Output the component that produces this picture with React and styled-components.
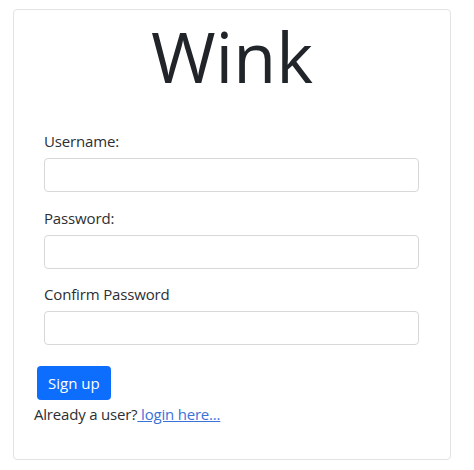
import React from 'react'
import styled, { createGlobalStyle } from 'styled-components'

const GlobalStyle = createGlobalStyle`
  body {
    margin: 0;
    background: #fff;
    font-family: "Open Sans", "Liberation Sans", sans-serif;
    color: #212529;
  }
`

const Card = styled.div`
  box-sizing: border-box;
  width: 438px;
  height: 451px;
  margin: 9px 0 0 13px;
  border: 1px solid #e3e3e3;
  border-radius: 4px;
  display: flex;
  flex-direction: column;
`

const Title = styled.h1`
  margin: 4px 0 0;
  font-size: 70px;
  font-weight: 400;
  line-height: 84px;
  text-align: center;
  color: #212529;
`

const Form = styled.form`
  display: flex;
  flex-direction: column;
  margin-top: 32px;
`

const Field = styled.div`
  display: flex;
  flex-direction: column;
  padding: 0 31px 0 30px;
  margin-bottom: 14.5px;
`

const Label = styled.label`
  font-size: 15px;
  line-height: 22px;
  letter-spacing: -0.15px;
  margin-bottom: 6px;
  color: #2b2f33;
`

const Input = styled.input`
  box-sizing: border-box;
  height: 34px;
  width: 100%;
  border: 1px solid #d6d8da;
  border-radius: 4px;
  padding: 4px 10px;
  font-size: 15px;
  font-family: inherit;
  outline: none;
`

const Button = styled.button`
  align-self: flex-start;
  margin: 6px 0 0 23px;
  height: 34px;
  padding: 0 11px;
  border: none;
  border-radius: 4px;
  background: #0d6efd;
  color: #fff;
  font-family: inherit;
  font-size: 15px;
  line-height: 22px;
  cursor: pointer;
`

const Footer = styled.p`
  margin: 3px 0 0 20px;
  font-size: 15px;
  line-height: 22px;
  letter-spacing: -0.2px;
  color: #2b2f33;
`

const Link = styled.a`
  color: #3a72da;
  text-decoration: underline;
`

export default function App() {
  const fields = [
    { key: 0, id: 'username', title: 'Username:', type: 'text' },
    { key: 1, id: 'password', title: 'Password:', type: 'password' },
    { key: 2, id: 'confirm', title: 'Confirm Password', type: 'password' },
  ]

  return (
    <>
      <GlobalStyle />
      <Card>
        <Title>Wink</Title>
        <Form onSubmit={(e) => e.preventDefault()}>
          {fields.map(el => (
            <Field key={el.key}>
              <Label htmlFor={el.id}>{el.title}</Label>
              <Input id={el.id} name={el.id} type={el.type} />
            </Field>
          ))}
          <Button type='submit'>Sign up</Button>
        </Form>
        <Footer>
          Already a user?<Link href='#'> login here...</Link>
        </Footer>
      </Card>
    </>
  )
}
